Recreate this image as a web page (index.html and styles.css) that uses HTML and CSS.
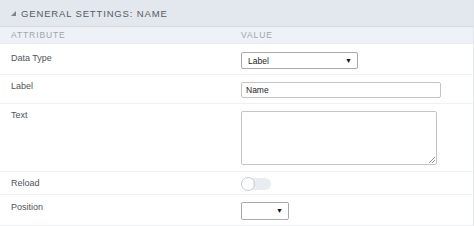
FILE: index.html
```html
<!DOCTYPE html>
<html lang="en">
<head>
<meta charset="UTF-8">
<title>General Settings</title>
<link rel="stylesheet" href="styles.css">
</head>
<body>
<div class="panel">
  <div class="panel-title"><span class="caret"></span>GENERAL SETTINGS: NAME</div>
  <table>
    <thead>
      <tr>
        <th class="col-attr">ATTRIBUTE</th>
        <th>VALUE</th>
      </tr>
    </thead>
    <tbody>
      <tr class="row-type">
        <td>Data Type</td>
        <td><div class="select select-wide"><span>Label</span><span class="arrow">▼</span></div></td>
      </tr>
      <tr class="row-label">
        <td>Label</td>
        <td><div class="input">Name</div></td>
      </tr>
      <tr class="row-text">
        <td>Text</td>
        <td><div class="textarea"><span class="grip"></span></div></td>
      </tr>
      <tr class="row-reload">
        <td>Reload</td>
        <td><div class="toggle"><span class="knob"></span></div></td>
      </tr>
      <tr class="row-pos">
        <td>Position</td>
        <td><div class="select select-small"><span></span><span class="arrow">▼</span></div></td>
      </tr>
    </tbody>
  </table>
</div>
</body>
</html>
```

FILE: styles.css
```css
body {
  margin: 0;
  font-family: "Liberation Sans", Arial, sans-serif;
  background: #fff;
  color: #444;
}
.panel {
  width: 473px;
  border-right: 1px solid #e3e6ea;
  height: 226px;
  overflow: hidden;
}
.panel-title {
  height: 26px;
  line-height: 27px;
  background: #e3e7ee;
  border-bottom: 1px solid #d5dae2;
  padding-left: 21px;
  font-size: 9.5px;
  letter-spacing: 0.85px;
  color: #555b63;
  position: relative;
}
.caret {
  position: absolute;
  left: 11px;
  top: 11px;
  width: 0;
  height: 0;
  border-left: 5px solid transparent;
  border-bottom: 5px solid #7d838c;
}

table {
  width: 100%;
  border-collapse: collapse;
}
thead th {
  background: #eef1f5;
  height: 16px;
  padding: 0 11px;
  text-align: left;
  font-weight: normal;
  font-size: 8.5px;
  letter-spacing: 0.9px;
  color: #9ba7aa;
  border-bottom: 1px solid #e6e9ee;
}
th.col-attr,
tbody td:first-child {
  width: 208px;
}
tbody td {
  padding: 5px 11px 0;
  vertical-align: top;
  font-size: 9px;
  line-height: 12px;
  color: #505358;
  border-bottom: 1px solid #f0f1f3;
}
.row-type td { height: 22px; padding-top: 8px; }
.row-label td { height: 23px; }
.row-text td { height: 62px; }
.row-reload td { height: 17px; }
.row-pos td { height: 24px; padding-top: 6px; }

.select {
  display: flex;
  align-items: center;
  justify-content: space-between;
  height: 15px;
  border: 1px solid #a9a9a9;
  border-radius: 2px;
  padding: 0 5px 0 6px;
  font-size: 8.5px;
  color: #222;
  background: #fff;
}
.select-wide { width: 104px; }
.select-small { width: 35px; height: 16px; margin-top: 1px; }
.select .arrow {
  font-size: 7px;
  color: #111;
}
.input {
  width: 194px;
  height: 14px;
  line-height: 14px;
  margin-top: 2px;
  border: 1px solid #c4c4c4;
  border-radius: 2px;
  padding-left: 4px;
  font-size: 8.5px;
  color: #222;
}
.textarea {
  position: relative;
  width: 194px;
  height: 52px;
  margin-top: 2px;
  border: 1px solid #c4c4c4;
  border-radius: 2px;
}
.grip {
  position: absolute;
  right: 1px;
  bottom: 1px;
  width: 6px;
  height: 6px;
  background: linear-gradient(135deg, transparent 45%, #999 45%, #999 55%, transparent 55%, transparent 70%, #999 70%, #999 80%, transparent 80%);
}
.toggle {
  position: relative;
  width: 30px;
  height: 12px;
  margin-top: 1px;
  border-radius: 6px;
  background: #e9ecf0;
}
.knob {
  position: absolute;
  left: 0;
  top: -1px;
  width: 12px;
  height: 12px;
  border-radius: 50%;
  background: #fff;
  border: 1px solid #c9ccd1;
}
```
